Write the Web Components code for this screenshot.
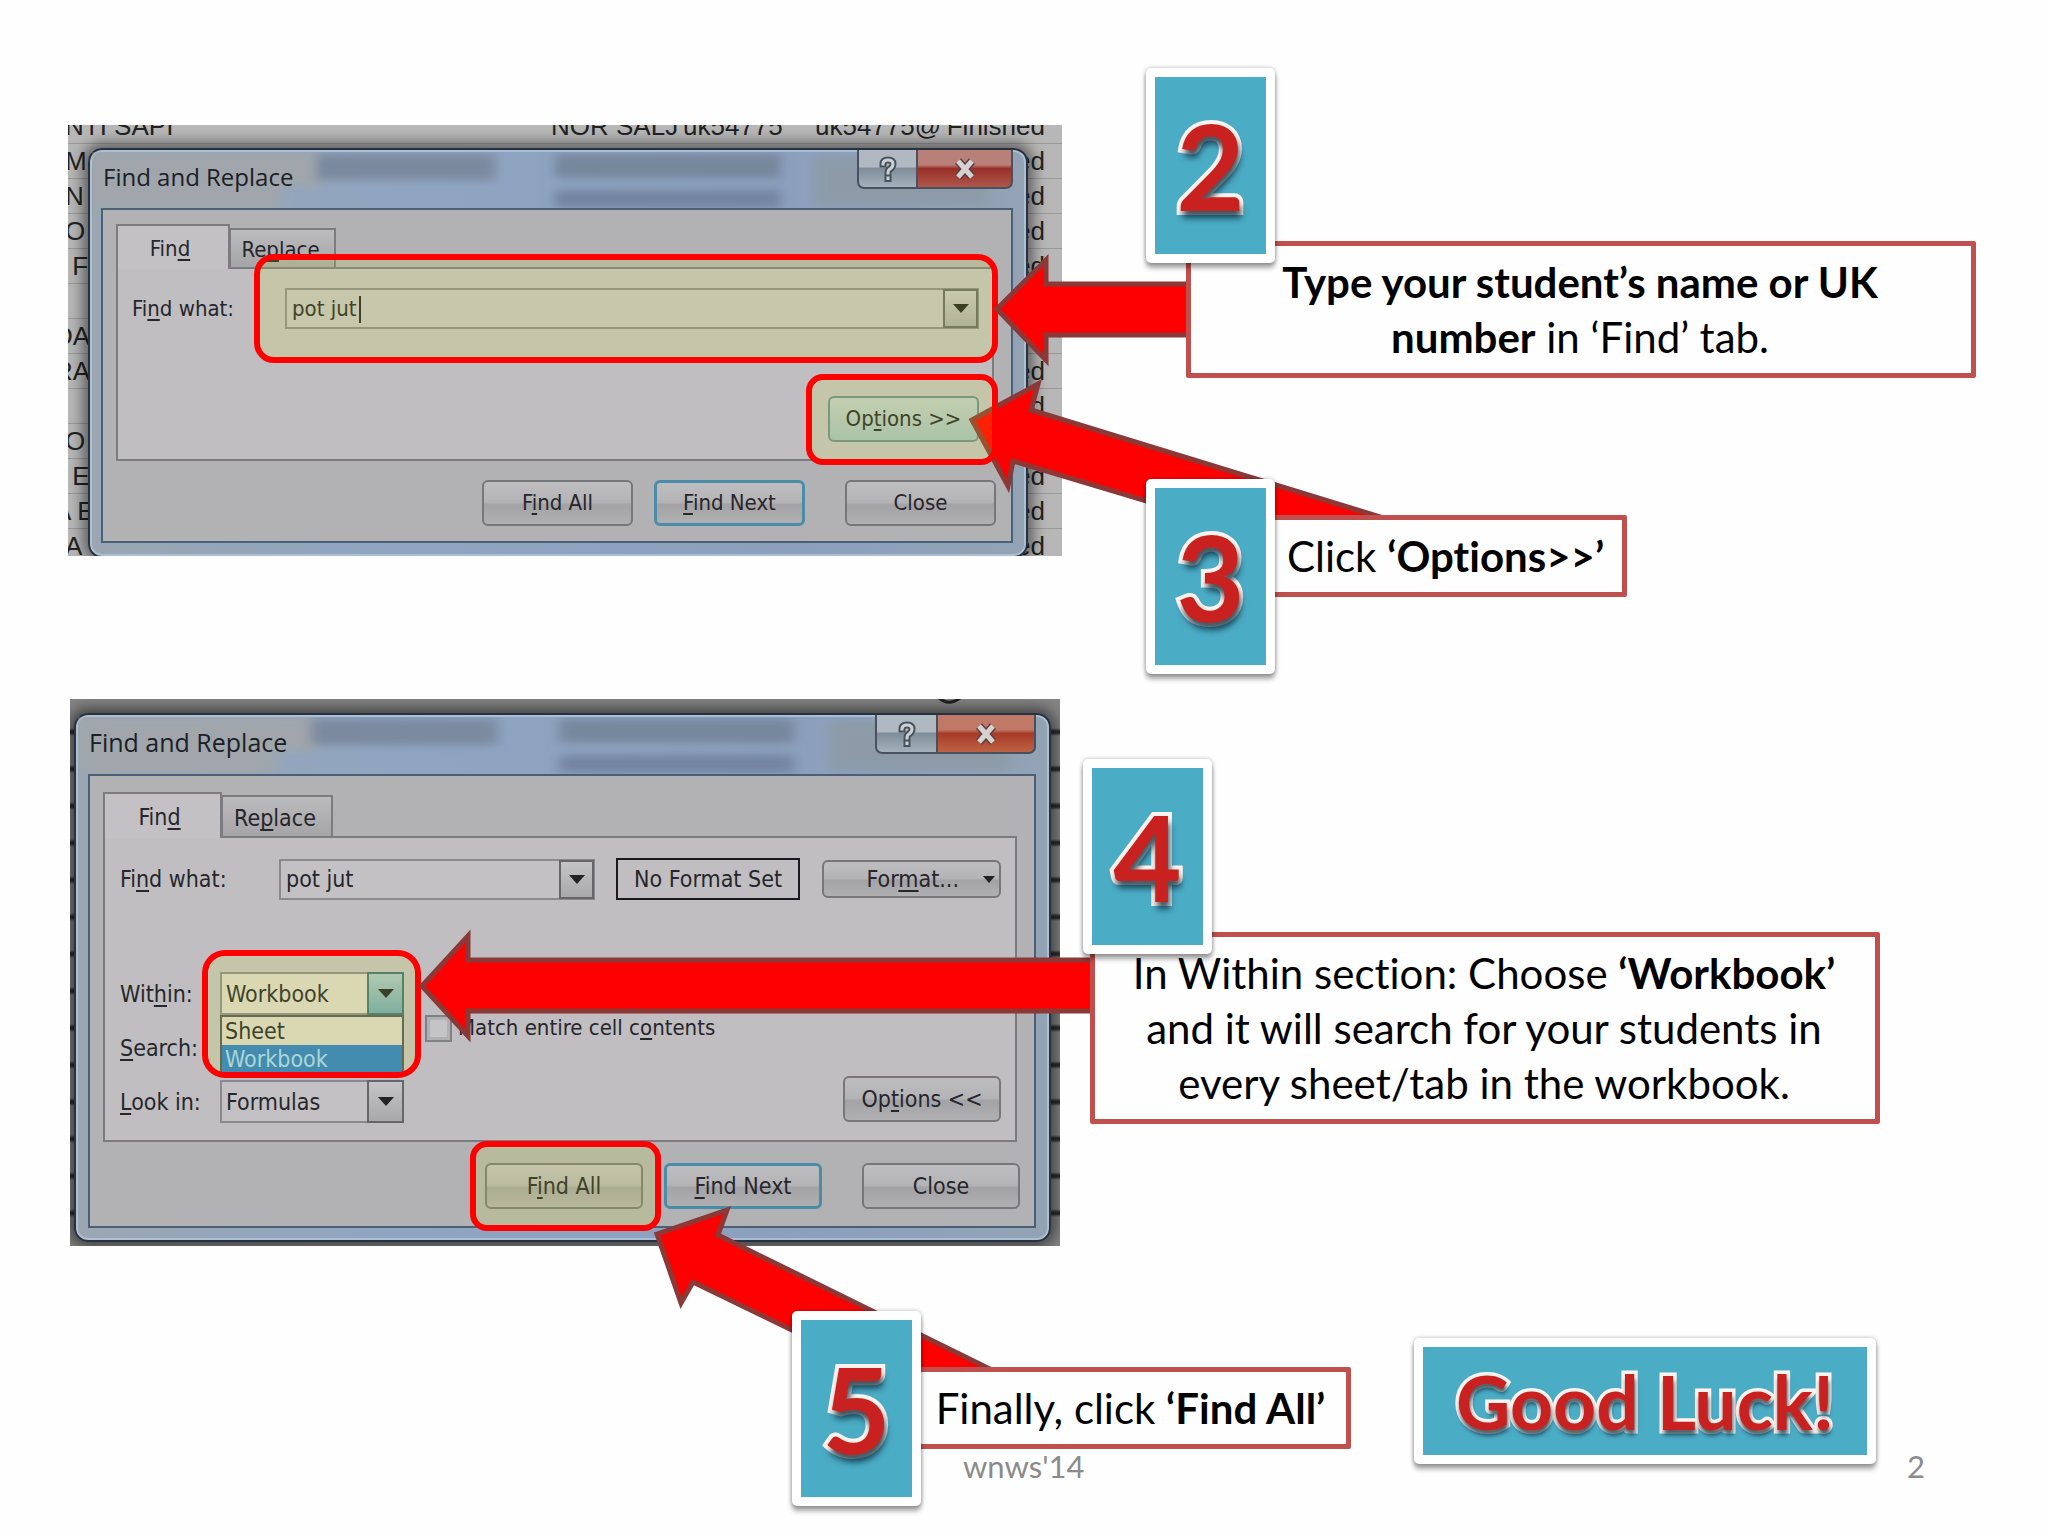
<!DOCTYPE html>
<html lang="en">
<head>
<meta charset="utf-8">
<title>Find and Replace guide</title>
<style>
  html, body { margin: 0; min-height: 100%; background: #fefefe; }
</style>
</head>
<body>
<guide-slide></guide-slide>

<template id="t-slide">
  <style>
    :host { display: block; position: relative; min-height: 100vh; overflow: hidden; background: #fefefe; color: #000;
      font-family: Lato, "Open Sans", sans-serif; font-size: 42px; line-height: 55px; font-variant-ligatures: none; }
    .row { display: grid; align-items: start; }
    .one { grid-template-columns: 68fr 994fr 124fr 790fr 72fr; padding-top: 125px; }
    .two { grid-template-columns: 70fr 990fr 30fr 790fr 168fr; padding-top: 102px; }
    .three { grid-template-columns: 850fr 501fr 63fr 462fr 172fr; padding-top: 92px; }
    .shot { grid-column: 2; }
    .notes { grid-column: 4; display: flex; flex-direction: column; align-items: flex-start; position: relative; z-index: 2; }
    .one .notes { padding-top: 116px; gap: 137px; }
    .two .notes { padding-top: 233px; }
    .wide { align-self: stretch; }
    .last { grid-column: 2; padding-top: 29px; position: relative; z-index: 2; }
    .luck { grid-column: 4; position: relative; z-index: 2; }
    .foot { display: block; color: #8b8b8b; font-size: 31px; line-height: 34px; }
    .last .foot { padding-left: 113px; }
    .num { grid-column: 5; align-self: end; padding-left: 31px; }
  </style>
  <main>
    <section class="row one">
      <sheet-shot class="shot" kind="a"><find-dialog kind="a"></find-dialog></sheet-shot>
      <div class="notes">
        <step-callout class="wide" step="2" style="--bx:-45px;--by:-178px"><b>Type your student’s name or UK<br>number</b> in ‘Find’ tab.</step-callout>
        <step-callout step="3" style="--bx:-45px;--by:-41px;--pl:96px"><span>Click <b>‘Options&gt;&gt;’</b></span></step-callout>
      </div>
    </section>
    <section class="row two">
      <sheet-shot class="shot" kind="b"><find-dialog kind="b"></find-dialog></sheet-shot>
      <div class="notes">
        <step-callout class="wide" step="4" style="--bx:-12px;--by:-178px">In Within section: Choose <b>‘Workbook’</b><br>and it will search for your students in<br>every sheet/tab in the workbook.</step-callout>
      </div>
    </section>
    <section class="row three">
      <div class="last">
        <step-callout step="5" style="--bx:-63px;--by:-61px;--pl:78px"><span>Finally, click <b>‘Find All’</b></span></step-callout>
        <small class="foot">wnws'14</small>
      </div>
      <art-tile class="luck" wide>Good Luck!</art-tile>
      <small class="foot num">2</small>
    </section>
  </main>
  <slide-marks></slide-marks>
</template>

<template id="t-marks">
  <style>
    :host { display: block; position: absolute; inset: 0; z-index: 1; pointer-events: none; }
    svg { display: block; width: 100%; height: auto; }
    .r { fill: rgba(226, 240, 30, .14); stroke: #f00; stroke-width: 6; }
    .a { fill: #f00; stroke: #8c3836; stroke-width: 5; stroke-miterlimit: 8; }
  </style>
  <svg viewBox="0 0 2048 1536" aria-hidden="true">
    <rect class="r" x="257" y="257" width="738" height="103" rx="17"/>
    <path class="a" d="M997 309 1046 260V284H1200V335H1046V360Z"/>
    <path class="a" d="M972 420 1038 384 1031 410 1400 523V577L1013 461 1008 486Z"/>
    <rect class="r" x="809" y="377" width="186" height="85" rx="14"/>
    <rect class="r" x="205" y="953" width="213" height="122" rx="20"/>
    <path class="a" d="M422 986 468 936V960H1100V1011H468V1036Z"/>
    <rect class="r" x="473" y="1144" width="185" height="84" rx="14"/>
    <path class="a" d="M657 1234 727 1210 718 1235 1000 1374V1431L693 1282 681 1303Z"/>
  </svg>
</template>

<template id="t-callout">
  <style>
    :host { display: block; position: relative; box-sizing: border-box; border: 5px solid #c0504d; background: #fefefe;
      text-align: center; padding: 9px 18px 8px var(--pl, 16px); border-radius: 2px; }
    .badge { position: absolute; left: var(--bx); top: var(--by); width: 129px; }
  </style>
  <art-tile class="badge"></art-tile>
  <slot></slot>
</template>

<template id="t-tile">
  <style>
    :host { display: block; box-sizing: border-box; border: 9px solid #fff; border-radius: 5px; background: #4bacc6;
      box-shadow: 0 5px 5px rgba(0,0,0,.35), 0 0 4px rgba(0,0,0,.28); text-align: center; font-weight: 700;
      font-size: 118px; line-height: 177px; color: #c9211f;
      -webkit-text-stroke: 8px #fdf3ee; paint-order: stroke fill; text-shadow: 2px 7px 6px rgba(0,30,45,.75); }
    :host([wide]) { font-size: 75px; line-height: 108px; -webkit-text-stroke-width: 7px; text-shadow: 1px 5px 4px rgba(0,30,45,.7); }
  </style>
  <slot></slot>
</template>

<template id="t-shot">
  <style>
    :host { display: block; position: relative; overflow: hidden; box-sizing: border-box; background: #b7b7b7; }
    :host([kind="a"]) { padding: 23px 34px 0 20px; height: 431px; }
    :host([kind="b"]) { padding: 14px 9px 4px 4px; background: #858585; }
    .sheet { position: absolute; left: 0; right: 0; top: -16px; font: 26px/34px "Liberation Sans", Arial, sans-serif; color: #222; }
    .line { display: grid; grid-template-columns: 483px 132px 132px 125px 1fr; border-bottom: 1px solid #999; white-space: pre; }
    .line :first-child { text-indent: -3px; }
    .line.cut :first-child { text-indent: -14px; }
    .line :last-child { text-align: right; padding-right: 17px; }
    :host([kind="b"]) .sheet { display: none; }
    .edge { position: absolute; inset: 0; display: none;
      background: repeating-linear-gradient(#0000 0 29px, #2c2c2c 32px 34px, #0000 37px); }
    :host([kind="b"]) .edge { display: block; }
    .tail { position: absolute; right: 98px; top: 0; }
    :host([kind="a"]) .tail { display: none; }
  </style>
  <div class="sheet"></div>
  <div class="edge"></div>
  <svg class="tail" width="26" height="8" aria-hidden="true"><path d="M2-2Q12 8 24-1" fill="none" stroke="#222" stroke-width="3"/></svg>
  <slot></slot>
</template>

<template id="t-dialog">
  <style>
    * { box-sizing: border-box; }
    :host { display: block; position: relative; box-sizing: border-box; border: 2px solid #26323f; border-radius: 14px;
      box-shadow: 0 0 14px 5px rgba(0,0,0,.5), inset 0 0 0 2px rgba(190,208,228,.6); color: #26262c;
      font: 22px/26px "DejaVu Sans Condensed", "DejaVu Sans", sans-serif;
      background: linear-gradient(90deg, #9aa6b2, #8fa5c2 35%, #8ca0be 75%, #93a3b4); }
    :host([kind="b"]) { font-size: 23px; }
    .glass { position: absolute; left: 2px; top: 2px; width: 100%; height: 58px; }
    header { display: flex; justify-content: space-between; align-items: flex-start; height: 58px; position: relative; }
    :host([kind="b"]) header { height: 59px; }
    h2 { margin: 0; font: 24px/28px "Open Sans", "Noto Sans", sans-serif; color: #1b2027; padding: 13px 0 0 13px; }
    :host([kind="b"]) h2 { font-size: 25px; }
    .caps { display: flex; padding-right: 13px; }
    .caps button { appearance: none; margin: 0; padding: 0; height: 39px; border: 2px solid #47525e; border-top: 0;
      display: grid; place-items: center; }
    .help { width: 59px; border-radius: 0 0 0 7px; border-right-width: 0 !important; background: linear-gradient(#b0b9c2 45%, #7f8d9a 50%, #a5b2bd); }
    .x { width: 97px; border-radius: 0 0 7px 0; background: linear-gradient(#b88078 40%, #983028 50%, #b0564b); }
    :host([kind="b"]) .help { width: 61px; }
    :host([kind="b"]) .x { width: 100px; background: linear-gradient(#c07867 40%, #a83b26 50%, #bd6244); }
    .body { position: relative; margin: 0 13px 13px 11px; border: 2px solid #4b5f76; background: #b2b1b3; padding: 14px 15px 15px 13px; }
    :host([kind="b"]) .body { margin: 0 13px 12px 12px; padding: 16px 14px 17px 13px; }
    .tabs { display: flex; align-items: flex-end; }
    .tabs button { appearance: none; font: inherit; color: inherit; border: 2px solid #7b7b80; padding: 0; margin: 0; }
    .t1 { width: 114px; height: 45px; background: #c3c1c3; border-bottom: 0 !important; margin-bottom: -2px !important; position: relative; padding: 2px 6px 0 0 !important; }
    .t2 { width: 107px; height: 39px; margin-left: -1px !important; border-bottom: 0 !important; padding: 3px 4px 0 0 !important; background: linear-gradient(#bcbbbd, #a5a4a6); }
    :host([kind="b"]) .t1 { width: 119px; height: 46px; }
    :host([kind="b"]) .t2 { width: 112px; height: 41px; }
    .pane { border: 2px solid #7b7b80; background: #c0bec0; margin-right: 4px; }
    :host([kind="a"]) .pane { height: 194px; padding: 19px 13px 0 14px; margin-right: 2px; }
    :host([kind="b"]) .pane { height: 306px; padding: 20px 14px 0 15px; margin-right: 3px; }
    .find { display: flex; align-items: center; }
    .find label { flex: 0 0 153px; }
    :host([kind="b"]) .find label { flex-basis: 159px; }
    .combo { flex: 1; display: flex; position: relative; height: 41px; border: 2px solid #8a8a8e; background: #c3c1c3; }
    .combo input { flex: 1; min-width: 0; width: 0; border: 0; outline: 0; background: none; font: inherit; color: inherit; padding: 0 0 0 5px; }
    .caret { position: absolute; left: 72px; top: 6px; width: 2px; height: 27px; background: #26262c; }
    .combo button { appearance: none; flex: 0 0 35px; margin: -1px; padding: 0; border: 2px solid #66666a; background: linear-gradient(#c4c3c5, #a9a8aa); display: grid; place-items: center; }
    .none { flex: 0 0 184px; height: 42px; margin: 0 22px 0 21px; border: 2px solid #19191f; text-align: center; line-height: 38px; }
    .btn { appearance: none; width: 151px; height: 46px; padding: 0; border: 2px solid #77777b; border-radius: 6px; font: inherit; color: inherit;
      background: linear-gradient(#bebdbf, #b4b3b5 48%, #a3a2a4 54%, #b0afb1); }
    :host([kind="b"]) .btn { width: 158px; }
    .btn.def { border: 3px solid #4b8da8; }
    .btn.hot { background: linear-gradient(#c0c9c8, #a0bcc0); border-color: #668c90; }
    .btn.fmt { flex: 0 0 179px; height: 38px; display: flex; align-items: center; justify-content: flex-end; gap: 24px; padding-right: 4px; }
    .opt { display: flex; justify-content: flex-end; padding-top: 67px; }
    footer { display: flex; justify-content: flex-end; padding-top: 19px; }
    :host([kind="b"]) footer { padding-top: 21px; }
    footer .def { margin: 0 40px 0 21px; }
    .more { display: flex; align-items: flex-start; margin-top: 72px; }
    .fields { display: grid; grid-template-columns: 100px 184px; grid-auto-rows: 43px; row-gap: 11px; align-items: center; position: relative; }
    .fields select { appearance: none; width: 100%; height: 43px; border: 2px solid #8a8a8e; border-radius: 0; font: inherit; color: inherit; padding: 0 0 0 4px; outline: 0; background: #c3c1c3; }
    .sel { position: relative; }
    .sel i { position: absolute; right: 0; top: 0; width: 37px; height: 43px; border: 2px solid #66666a; background: linear-gradient(#c4c3c5, #a9a8aa); display: grid; place-items: center; pointer-events: none; }
    .sel.on i { background: linear-gradient(#a9c3c8, #6fa5b6); border-color: #3f6f78; }
    .sel.on select { background: #d8d4cc; }
    .list { position: absolute; left: 100px; top: 43px; width: 184px; margin: 0; padding: 0; list-style: none; border: 2px solid #55555a; background: #d8d4cc; line-height: 28px; }
    .list li { padding-left: 3px; }
    .list li[aria-selected="true"] { background: #2a7cc8; color: #a4d2f4; }
    .check { display: flex; align-items: center; gap: 6px; margin: 42px auto 0 21px; line-height: 28px; font-size: 22px; }
    .check input { appearance: none; width: 27px; height: 27px; margin: 0; border: 2px solid #808084; background: #c4c3c5; box-shadow: inset 0 0 0 3px #b0afb1; }
    .more .btn { margin-top: 104px; }
    u { text-underline-offset: 3px; text-decoration-thickness: 2px; text-decoration-skip-ink: none; }
  </style>
  <svg class="glass" viewBox="0 0 940 58" preserveAspectRatio="none" aria-hidden="true">
    <defs><filter id="soft" x="-20%" y="-60%" width="140%" height="220%"><feGaussianBlur stdDeviation="6 4"/></filter></defs>
    <g filter="url(#soft)">
      <path d="M0 0H230V34H190V58H0Z" fill="#a0a6ab"/>
      <path d="M225 2H405V28H225Z" fill="#7a899e"/>
      <path d="M465 2H692V26H465Z" fill="#76879c"/>
      <path d="M465 38H692V56H465Z" fill="#7384a3"/>
      <path d="M725 4H900V54H725Z" fill="#8d9ba8"/>
    </g>
  </svg>
  <header>
    <h2>Find and Replace</h2>
    <div class="caps">
      <button class="help" aria-label="Help"><svg width="24" height="26" viewBox="0 0 24 26"><g fill="none" stroke-linecap="square"><path d="M7 8Q7 4 12 4T17 8Q17 11 14 13Q12 14 12 17M12 22V22.500" stroke="#48525c" stroke-width="7"/><path d="M7 8Q7 4 12 4T17 8Q17 11 14 13Q12 14 12 17M12 22V22.500" stroke="#ccd1d6" stroke-width="3"/></g></svg></button>
      <button class="x" aria-label="Close window"><svg width="26" height="24" viewBox="0 0 26 24"><path d="M6 4 20 20M20 4 6 20" stroke="#5b3f40" stroke-width="8"/><path d="M6 4 20 20M20 4 6 20" stroke="#d6d2d2" stroke-width="5"/></svg></button>
    </div>
  </header>
  <div class="body">
    <div class="tabs"><button class="t1">Fin<u>d</u></button><button class="t2">Re<u>p</u>lace</button></div>
    <div class="pane">
      <div class="find">
        <label for="what">Fi<u>n</u>d what:</label>
        <div class="combo"><input id="what" value="pot jut"><span class="caret basic"></span><button aria-label="Show recent"><svg width="16" height="9"><path d="M0 0H16L8 9Z" fill="#222226"/></svg></button></div>
        <div class="none adv">No Format Set</div>
        <button class="btn fmt adv"><span>For<u>m</u>at...</span><svg width="12" height="7"><path d="M0 0H12L6 7Z" fill="#222226"/></svg></button>
      </div>
      <div class="opt basic"><button class="btn hot">Op<u>t</u>ions &gt;&gt;</button></div>
      <div class="more adv">
        <div class="fields">
          <label for="within">Wit<u>h</u>in:</label>
          <div class="sel on"><select id="within"><option>Workbook</option></select><i><svg width="16" height="9"><path d="M0 0H16L8 9Z" fill="#222226"/></svg></i></div>
          <label for="search"><u>S</u>earch:</label>
          <div class="sel"><select id="search"></select></div>
          <label for="look"><u>L</u>ook in:</label>
          <div class="sel"><select id="look"><option>Formulas</option></select><i><svg width="16" height="9"><path d="M0 0H16L8 9Z" fill="#222226"/></svg></i></div>
          <ul class="list" role="listbox"><li role="option">Sheet</li><li role="option" aria-selected="true">Workbook</li></ul>
        </div>
        <label class="check"><input type="checkbox"><span>Match entire cell c<u>o</u>ntents</span></label>
        <button class="btn">Op<u>t</u>ions &lt;&lt;</button>
      </div>
    </div>
    <footer><button class="btn">F<u>i</u>nd All</button><button class="btn def"><u>F</u>ind Next</button><button class="btn">Close</button></footer>
  </div>
</template>

<script>
  function attach(host, id) {
    const root = host.attachShadow({ mode: "open" });
    root.append(document.getElementById(id).content.cloneNode(true));
    return root;
  }
  customElements.define("art-tile", class extends HTMLElement {
    constructor() { super(); attach(this, "t-tile"); }
  });
  customElements.define("step-callout", class extends HTMLElement {
    connectedCallback() {
      if (this.shadowRoot) return;
      attach(this, "t-callout").querySelector(".badge").textContent = this.getAttribute("step");
    }
  });
  customElements.define("sheet-shot", class extends HTMLElement {
    connectedCallback() {
      if (this.shadowRoot) return;
      const root = attach(this, "t-shot");
      if (this.getAttribute("kind") !== "a") return;
      const rows = [["NTI SAPI", "NOR SALJ", "uk54775", "uk54775@", "Finished"]]
        .concat(["M", "N", "O", " F", "", "DA", "RA", "", "O", " E", "A E", "A"].map(t => [t, "", "", "", "ed"]));
      for (const cells of rows) {
        const line = document.createElement("div");
        line.className = /^(DA|RA|A E)$/.test(cells[0]) ? "line cut" : "line";
        for (const text of cells) {
          const cell = document.createElement("span");
          cell.textContent = text;
          line.append(cell);
        }
        root.querySelector(".sheet").append(line);
      }
    }
  });
  customElements.define("find-dialog", class extends HTMLElement {
    connectedCallback() {
      if (this.shadowRoot) return;
      const drop = this.getAttribute("kind") === "a" ? ".adv" : ".basic";
      attach(this, "t-dialog").querySelectorAll(drop).forEach(el => el.remove());
    }
  });
  customElements.define("slide-marks", class extends HTMLElement {
    constructor() { super(); attach(this, "t-marks"); }
  });
  customElements.define("guide-slide", class extends HTMLElement {
    constructor() { super(); attach(this, "t-slide"); }
  });
</script>
</body>
</html>
